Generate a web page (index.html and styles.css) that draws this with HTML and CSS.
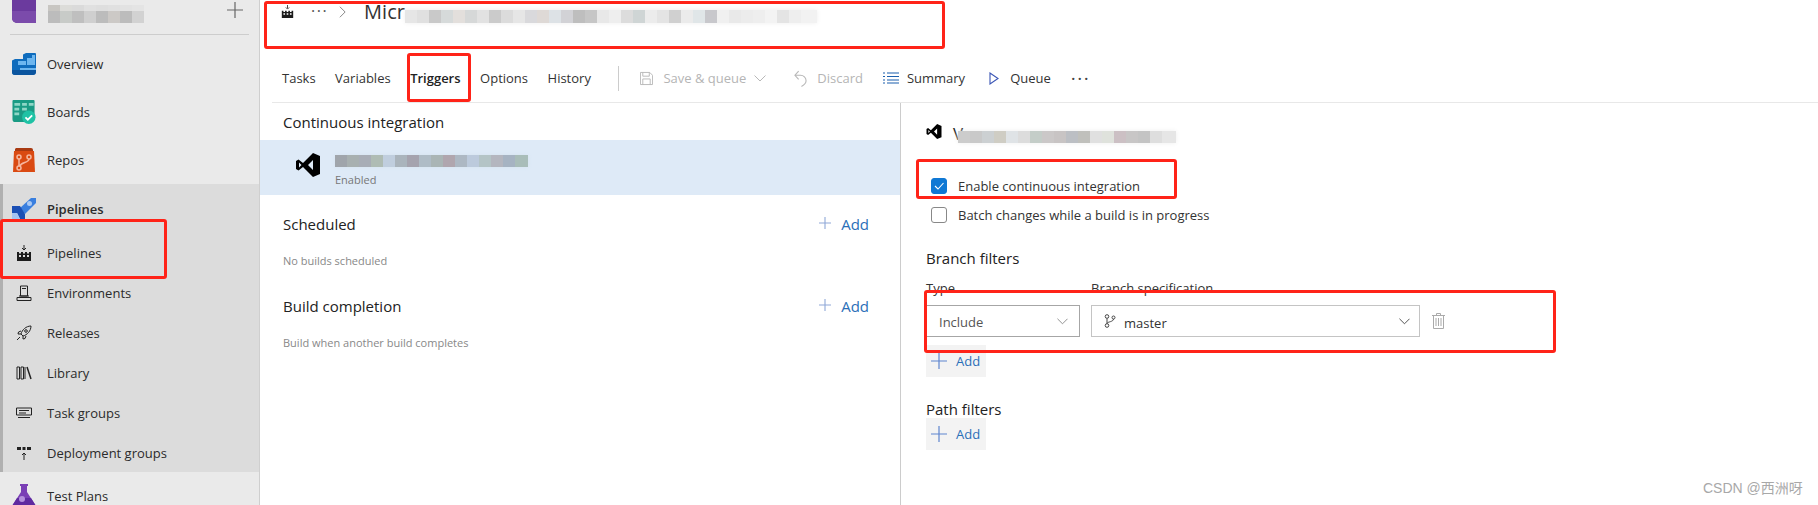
FILE: index.html
```html
<!DOCTYPE html>
<html lang="en">
<head>
<meta charset="utf-8">
<title>Pipeline triggers</title>
<link rel="stylesheet" href="styles.css">
</head>
<body>
<div class="app">
  <aside class="sidebar">
    <div class="org">
      <svg class="org-logo" viewBox="0 0 24 23"><path d="M0 0h24v23H5a5 5 0 0 1-5-5z" fill="#6b3a9e"/><path d="M0 11h24v12H5a5 5 0 0 1-5-5z" fill="#7b4bab"/></svg>
      <span class="mosaic mosaic-org"></span>
      <svg class="org-plus" viewBox="0 0 16 16"><path d="M8 0v16M0 8h16" stroke="#666" stroke-width="1.2"/></svg>
    </div>
    <nav class="nav">
      <a class="nav-item"><svg class="hub" viewBox="0 0 24 22"><path d="M0 7.5 3 6h8V1.5L14 0h9a1 1 0 0 1 1 1v17a4 4 0 0 1-4 4H3a3 3 0 0 1-3-3z" fill="#0f6cbd"/><path d="M8 15h16v3H8zM6 8h8v4H6zM15 5h5V2h3v10h-8z" fill="#6db6ef"/><path d="M0 17h24v2a3 3 0 0 1-3 3H3a3 3 0 0 1-3-3z" fill="#0b559f"/></svg><span>Overview</span></a>
      <a class="nav-item"><svg class="hub" viewBox="0 0 24 25"><path d="M0 1a1 1 0 0 1 1-1h21a1 1 0 0 1 1 1v15H12v7H3a3 3 0 0 1-3-3z" fill="#1a9b84"/><path d="M2 3h6v3H2zM10 3h5v3h-5zM17 3h5v3h-5zM2 8h5v3H2zM10 8h5v3h-5zM2 13h5v3H2z" fill="#8ed6c6"/><circle cx="17" cy="18" r="7" fill="#1fc2a5"/><path d="m13.5 18 2.5 2.5 4.500-4.500" fill="none" stroke="#fff" stroke-width="1.800"/></svg><span>Boards</span></a>
      <a class="nav-item"><svg class="hub" viewBox="0 0 24 24"><path d="M4 0h15a2 2 0 0 1 2 2v4H3V1z" fill="#a83a12"/><path d="M2 3h20l1 21H1z" fill="#da4a12"/><g fill="none" stroke="#f6b79f" stroke-width="1.500"><circle cx="7" cy="9" r="2"/><circle cx="17" cy="9" r="2"/><circle cx="7" cy="20" r="2"/><path d="M7 11v7M17 11c0 4-8 3-9 7"/></g></svg><span>Repos</span></a>
      <div class="section">
        <a class="nav-item nav-head"><svg class="hub" viewBox="0 0 24 24"><path d="M8 11 19 1h5v5L13 17z" fill="#3a7fdf"/><circle cx="17.500" cy="6.500" r="2.500" fill="#a9c8f3"/><path d="M0 9h8l5 8v7H9L5 16H0z" fill="#1a4fb5"/><path d="M0 16h5l3 6H0z" fill="#a3c3f2"/></svg><span>Pipelines</span></a>
        <a class="nav-item sub"><svg class="sub-icon" viewBox="0 0 16 16"><path d="M8 0v4M6 3l2 2 2-2" fill="none" stroke="#222" stroke-width="1"/><path d="M1 7h2v1.500h2V7h2v1.500h2V7h2v1.500h2V7h2v9H1z" fill="#1c1c1c"/><path d="M3 10h2v2H3zM7 10h2v2H7zM11 10h2v2h-2z" fill="#dcdcdc"/></svg><span>Pipelines</span></a>
        <a class="nav-item sub"><svg class="sub-icon" viewBox="0 0 16 16"><path d="M4.500 1h7v10h-7zM6 3.500h4M1 15.500v-3h14v3zM3 11h10" fill="none" stroke="#222"/></svg><span>Environments</span></a>
        <a class="nav-item sub"><svg class="sub-icon" viewBox="0 0 16 16"><path d="M5 9c1-4 5-8 10-8 0 5-4 9-8 10zM5 6 2.500 7 2 9l3 0M10 11l-1 2.500-2 .500V11" fill="none" stroke="#222"/><circle cx="10" cy="6" r="1.300" fill="none" stroke="#222"/><path d="M4 12l-3 3" stroke="#222"/></svg><span>Releases</span></a>
        <a class="nav-item sub"><svg class="sub-icon" viewBox="0 0 16 16"><path d="M1 2h2.500v12H1zM5 2h2.500v12H5zM9 2v12" fill="none" stroke="#222"/><path d="m11 2 4 12" fill="none" stroke="#222" stroke-width="1.500"/></svg><span>Library</span></a>
        <a class="nav-item sub"><svg class="sub-icon" viewBox="0 0 16 16"><path d="M.5 3h15v7H.5zM3 5.500h10M3 8h7M2 12.500h12" fill="none" stroke="#222"/></svg><span>Task groups</span></a>
        <a class="nav-item sub"><svg class="sub-icon" viewBox="0 0 16 16"><path d="M1 2h4v3H1zM6.500 2h3v3h-3zM11 2h4v3h-4z" fill="#222"/><path d="M8 15V8M6 10l2-2 2 2" fill="none" stroke="#222"/></svg><span>Deployment groups</span></a>
      </div>
      <a class="nav-item"><svg class="hub" viewBox="0 0 24 24"><path d="M8 0h8v2h-1v6l9 14v2H0v-2L9 8V2H8z" fill="#7a3fb5"/><path d="M5 14h14l5 8v2H0v-2z" fill="#5f2aa0"/><circle cx="10" cy="15" r="3" fill="#b48fdc"/></svg><span>Test Plans</span></a>
    </nav>
  </aside>

  <main class="main">
    <header class="crumbs">
      <svg class="crumb-icon" viewBox="0 0 16 16"><path d="M8 0v4M6 3l2 2 2-2" fill="none" stroke="#222"/><path d="M1 7h2v1.500h2V7h2v1.500h2V7h2v1.500h2V7h2v9H1z" fill="#1c1c1c"/><path d="M3 10h2v2H3zM7 10h2v2H7zM11 10h2v2h-2z" fill="#fff"/></svg>
      <span class="crumb-dots">···</span>
      <svg class="crumb-chevron" viewBox="0 0 8 12"><path d="m1 0 6 6-6 6" fill="none" stroke="#777"/></svg>
      <span class="crumb-title">Micr</span><span class="mosaic mosaic-title"></span>
    </header>

    <div class="toolbar">
      <span class="tab">Tasks</span>
      <span class="tab">Variables</span>
      <span class="tab tab-on">Triggers</span>
      <span class="tab">Options</span>
      <span class="tab">History</span>
      <span class="divider"></span>
      <span class="cmd off cmd-save"><svg class="cmd-icon" viewBox="0 0 14 14"><path d="M.5.500h10l3 3v10H.500zM3 .500v4h7v-4M3 13.500v-6h8v6" fill="none" stroke="#b8b8b8"/></svg>Save &amp; queue<svg class="cmd-chev" viewBox="0 0 12 7"><path d="m.5.500 5.500 5.500 5.500-5.500" fill="none" stroke="#b8b8b8"/></svg></span>
      <span class="cmd off cmd-discard"><svg class="cmd-icon" viewBox="0 0 14 18"><path d="M1 5.500h6a6 6 0 0 1 6 6c0 2.500-2 4.500-5 6M5 1 1 5.500 5 10" fill="none" stroke="#b8b8b8" stroke-width="1.200"/></svg>Discard</span>
      <span class="cmd cmd-summary"><svg class="cmd-list" viewBox="0 0 16 12"><path d="M0 1h2M4 1h12M0 4.500h2M4 4.500h12M0 8h2M4 8h12M0 11h2M4 11h12" stroke="#1b5fae" stroke-width="1.200"/></svg>Summary</span>
      <span class="cmd cmd-queue"><svg class="cmd-play" viewBox="0 0 10 13"><path d="M1 1v11l8-5.500z" fill="none" stroke="#3a55b5" stroke-width="1.100"/></svg>Queue</span>
      <span class="more">···</span>
    </div>

    <div class="panes">
      <section class="left">
        <h2 class="ci-title">Continuous integration</h2>
        <div class="repo-row">
          <svg class="vs-big" viewBox="0 0 24 24"><path d="M17 0 24 3v18l-7 3-10-10-4.500 3.500L0 16V8l2.500-1.500L7 10zM17 7l-5 5 5 5zM3 9.500v5L5.500 12z" fill="#000" fill-rule="evenodd"/></svg>
          <div class="repo-text"><span class="mosaic mosaic-repo"></span><span class="repo-state">Enabled</span></div>
        </div>
        <div class="sec-head first"><h2>Scheduled</h2><span class="add-link"><svg class="add-plus" viewBox="0 0 12 12"><path d="M6 0v12M0 6h12" stroke="#8fa8d8" stroke-width="1.100"/></svg>Add</span></div>
        <p class="note">No builds scheduled</p>
        <div class="sec-head"><h2>Build completion</h2><span class="add-link"><svg class="add-plus" viewBox="0 0 12 12"><path d="M6 0v12M0 6h12" stroke="#8fa8d8" stroke-width="1.100"/></svg>Add</span></div>
        <p class="note">Build when another build completes</p>
      </section>

      <section class="right">
        <div class="detail-title">
          <svg class="vs-small" viewBox="0 0 24 24"><path d="M17 0 24 3v18l-7 3-10-10-4.500 3.500L0 16V8l2.500-1.500L7 10zM17 7l-5 5 5 5zM3 9.500v5L5.500 12z" fill="#000" fill-rule="evenodd"/></svg>
          <span class="detail-v">V</span><span class="mosaic mosaic-detail"></span>
        </div>
        <label class="check check-first"><span class="box box-on"><svg viewBox="0 0 16 16"><path d="m4 8 3 3 5.500-6" fill="none" stroke="#fff" stroke-width="1.100"/></svg></span>Enable continuous integration</label>
        <label class="check"><span class="box"></span>Batch changes while a build is in progress</label>
        <h2 class="filter-head branch-head">Branch filters</h2>
        <div class="filter-grid">
          <span class="field-label">Type</span>
          <span class="field-label">Branch specification</span>
          <span></span>
          <div class="select select-type"><span class="select-text">Include</span><svg class="select-chev light" viewBox="0 0 12 7"><path d="m.5.500 5.500 5.500 5.500-5.500" fill="none" stroke="#888"/></svg></div>
          <div class="select select-branch"><svg class="branch-icon" viewBox="0 0 12 14"><g fill="none" stroke="#444"><circle cx="3" cy="2.500" r="1.800"/><circle cx="3" cy="11.500" r="1.800"/><circle cx="9.500" cy="3.500" r="1.500"/><path d="M3 4.500v5M9.500 5c0 3-6 2.500-6.500 4.500"/></g></svg><span class="select-text">master</span><svg class="select-chev" viewBox="0 0 12 7"><path d="m.5.500 5.500 5.500 5.500-5.500" fill="none" stroke="#444"/></svg></div>
          <svg class="trash" viewBox="0 0 13 16"><path d="M4.500 2V.500h4V2M0 2.500h13M1.500 3v12.500h10V3" fill="none" stroke="#aaa"/><path d="M4 5v8M6.500 5v8M9 5v8" stroke="#aaa"/></svg>
        </div>
        <div class="add-btn add-branch"><svg class="btn-plus" viewBox="0 0 16 16"><path d="M8 0v16M0 8h16" stroke="#5f86cf" stroke-width="1.200"/></svg>Add</div>
        <h2 class="filter-head path-head">Path filters</h2>
        <div class="add-btn"><svg class="btn-plus" viewBox="0 0 16 16"><path d="M8 0v16M0 8h16" stroke="#5f86cf" stroke-width="1.200"/></svg>Add</div>
      </section>
    </div>
  </main>
</div>

<div class="mark mark-title"></div>
<div class="mark mark-triggers"></div>
<div class="mark mark-pipelines"></div>
<div class="mark mark-enable"></div>
<div class="mark mark-branch"></div>
<div class="watermark">CSDN @西洲呀</div>
</body>
</html>
```
FILE: styles.css
```css
* { box-sizing: border-box; }
html, body { margin: 0; height: 505px; overflow: hidden; background: #fff; }
body { position: relative; font-family: "Open Sans", "Liberation Sans", sans-serif; font-size: 13px; color: #2b2b2b; }
h2, p { margin: 0; font-weight: 400; }

.app { display: flex; height: 505px; }

/* Sidebar */
.sidebar { width: 260px; flex: none; background: #eaeaea; border-right: 1px solid #cfcfcf; overflow: hidden; }
.org { position: relative; display: flex; align-items: flex-start; height: 35px; margin: 0 10px; border-bottom: 1px solid #cdcdcd; }
.org-logo { width: 24px; height: 23px; margin-left: 2px; flex: none; }
.org-plus { width: 16px; height: 16px; margin: 2px 6px 0 auto; }
.mosaic { display: block; flex: none; box-shadow: 0 0 5px #eee; }
.mosaic-org { width: 96px; height: 18px; margin: 5px 0 0 12px; box-shadow: none;
  background:
    linear-gradient(90deg,#c8c6c2 12px,#dcdcd9 0 24px,#dadada 0 36px,#e0e0e0 0 48px,#dedede 0 60px,#e0e0e0 0 72px,#e2e2e2 0 84px,#e4e4e4 0) top/100% 6px no-repeat,
    linear-gradient(90deg,#bcbcbc 12px,#c8cbc8 0 24px,#bfbfbf 0 36px,#cfcfcf 0 48px,#bcbcbc 0 60px,#ccc9c6 0 72px,#bcbcbc 0 84px,#d2d2d2 0); }
.nav { display: flex; flex-direction: column; margin-top: 5px; }
.nav-item { display: flex; align-items: center; height: 48px; padding-left: 12px; flex: none; }
.nav-item span { margin-left: 11px; }
.hub { width: 24px; height: 24px; flex: none; }
.section { height: 288px; background: #dcdcdc; border-left: 3px solid #b0b0b0; }
.nav-head { height: 49px; padding-left: 9px; font-weight: 600; }
.sub { height: 40px; padding-left: 13px; }
.sub span { margin-left: 15px; }
.sub-icon { width: 16px; height: 16px; flex: none; }

/* Main */
.main { flex: 1; min-width: 0; display: flex; flex-direction: column; }
.crumbs { display: flex; align-items: flex-start; height: 54px; padding-left: 21px; }
.crumb-icon { width: 13px; height: 13px; margin-top: 5px; }
.crumb-dots { margin: 1px 0 0 17px; font-size: 16px; line-height: 20px; color: #555; letter-spacing: 1.5px; }
.crumb-chevron { width: 7px; height: 12px; margin: 6px 0 0 11px; }
.crumb-title { margin-left: 18px; font-size: 20px; line-height: 24px; color: #333; }
.mosaic-title { width: 412px; height: 13px; margin-top: 10px;
  background: linear-gradient(90deg,#e6e6e6 12px,#e0e0e0 0 24px,#c9c9c9 0 36px,#d6dada 0 48px,#e3dfdc 0 60px,#d6d8d8 0 72px,#e2e2e2 0 84px,#cbcbcb 0 96px,#dcdcdc 0 108px,#e6e6e6 0 120px,#d9d9dc 0 132px,#ded9d6 0 144px,#dde2e6 0 156px,#d2d2d6 0 168px,#bebebe 0 180px,#c6c6c6 0 192px,#e8e8e8 0 204px,#eee 0 216px,#dcdcdc 0 228px,#cfd5d5 0 240px,#ececec 0 252px,#e4e4e4 0 264px,#d0d0d0 0 276px,#ebebeb 0 288px,#e0e6e8 0 300px,#c8c8cc 0 312px,#f0f0f0 0 324px,#e9e9e9 0 336px,#ececec 0 348px,#eee 0 360px,#f3f3f3 0 372px,#e4e4e4 0 384px,#eee 0 396px,#f2f2f2 0); }

.toolbar { display: flex; align-items: center; height: 49px; margin-left: 12px; padding-left: 10px; border-bottom: 1px solid #e8e8e8; flex: none; }
.tab { margin-right: 19.5px; color: #333; }
.tab-on { font-weight: 600; color: #222; }
.divider { width: 1px; height: 25px; margin: 0 21px 0 8px; background: #ccc; }
.cmd { display: flex; align-items: center; color: #333; }
.off { color: #b5b5b5; }
.cmd-icon { width: 13px; height: 15px; margin-right: 10px; }
.cmd-discard .cmd-icon { height: 17px; }
.cmd-chev { width: 12px; height: 7px; margin-left: 8px; }
.cmd-discard { margin-left: 28px; }
.cmd-summary { margin-left: 20px; }
.cmd-list { width: 16px; height: 12px; margin-right: 8px; }
.cmd-queue { margin-left: 24px; }
.cmd-play { width: 10px; height: 13px; margin-right: 11px; }
.more { margin-left: 20px; font-size: 19px; color: #444; line-height: 16px; letter-spacing: 1.5px; }

.panes { flex: 1; display: flex; min-height: 0; }
.left { width: 640px; flex: none; }
.ci-title { height: 37px; padding-left: 23px; font-size: 15px; line-height: 38px; color: #222; }
.repo-row { display: flex; height: 55px; padding-left: 36px; background: #deeaf7; }
.vs-big { width: 24px; height: 24px; margin-top: 13px; }
.repo-text { margin-left: 15px; }
.mosaic-repo { width: 193px; height: 12px; margin-top: 15px; box-shadow: 0 0 4px #d5e2ef;
  background: linear-gradient(90deg,#a0a5ab 12px,#a8b0b0 0 24px,#a8adb6 0 36px,#afbcb4 0 48px,#c0cede 0 60px,#aab4bc 0 72px,#a5a3ae 0 84px,#afbcc6 0 96px,#aab5b5 0 108px,#b0a6ae 0 120px,#adb8c3 0 132px,#bccadc 0 144px,#b4c4c6 0 156px,#b4b6bf 0 168px,#a6b3c2 0 180px,#a9bdb9 0); }
.repo-state { display: block; margin-top: 6px; font-size: 11px; line-height: 14px; color: #777; }
.sec-head { display: flex; align-items: center; justify-content: space-between; height: 40px; margin-top: 8px; padding: 2px 31px 0 23px; }
.sec-head h2 { font-size: 15px; color: #222; }
.add-link { display: flex; align-items: center; font-size: 15px; color: #2a6fb8; }
.add-plus { width: 12px; height: 12px; margin: -2px 10px 0 0; }
.note { height: 34px; padding-left: 23px; font-size: 11px; line-height: 36px; color: #888; }

.right { flex: 1; border-left: 1px solid #ccc; padding-left: 25px; }
.detail-title { display: flex; align-items: flex-start; height: 20px; margin-top: 20px; }
.vs-small { width: 16px; height: 15px; margin-top: 1px; }
.detail-v { margin-left: 11px; font-size: 17px; line-height: 22px; color: #222; width: 5px; }
.mosaic-detail { width: 218px; height: 12px; margin-top: 8px;
  background: linear-gradient(90deg,#ccc 12px,#c9c9c9 0 24px,#ccd0d2 0 36px,#cfcdc4 0 48px,#dfe3e6 0 60px,#dcdcdc 0 72px,#c4cdc8 0 84px,#cbc8c8 0 96px,#c8c4c4 0 108px,#bcbfc4 0 120px,#c0c0bc 0 132px,#e0e0e0 0 144px,#dfe2dc 0 156px,#ccc0c4 0 168px,#c8c6c6 0 180px,#c4c4c4 0 192px,#dedede 0 204px,#e6e6e6 0); }
.check { display: flex; align-items: center; height: 29px; margin-left: 5px; color: #333; }
.check-first { margin-top: 28px; }
.box { width: 16px; height: 16px; margin-right: 11px; border: 1px solid #888; border-radius: 3px; background: #fff; flex: none; }
.box svg { display: block; width: 16px; height: 16px; margin: -1px; }
.box-on { background: #0f78d4; border-color: #0f78d4; }
.filter-head { height: 20px; font-size: 15px; line-height: 20px; color: #222; }
.branch-head { margin-top: 18px; line-height: 22px; }
.filter-grid { display: grid; grid-template-columns: 154px 329px 13px; column-gap: 11px; grid-template-rows: 18px 32px; row-gap: 8px; align-items: center; margin-top: 12px; }
.field-label { color: #333; line-height: 18px; }
.select { display: flex; align-items: center; height: 32px; border: 1px solid #c4c4c4; }
.select-type { padding-left: 12px; border-color: #a6a6a6; color: #555; }
.select-branch { padding-left: 12px; color: #333; }
.select-text { padding-top: 3px; }
.select-type .select-text { padding-top: 2px; }
.branch-icon { width: 12px; height: 14px; margin-right: 8px; }
.select-chev { width: 11px; height: 7px; margin-left: auto; margin-right: 9px; }
.select-chev.light { margin-right: 11px; }
.trash { width: 13px; height: 16px; margin-left: 1px; }
.add-btn { display: flex; align-items: center; width: 60px; height: 32px; padding-left: 5px; background: #f3f3f3; color: #2a6fb8; margin-top: 0; }
.add-branch { margin-top: 8px; }
.btn-plus { width: 16px; height: 16px; margin-right: 9px; }
.path-head { height: 19px; margin-top: 22px; }

/* Annotation rectangles over the capture */
.mark { position: absolute; border: 3px solid #ff2318; border-radius: 3px; pointer-events: none; }
.mark-title { left: 264px; top: 1px; width: 681px; height: 48px; }
.mark-triggers { left: 407px; top: 53px; width: 64px; height: 49px; }
.mark-pipelines { left: 0; top: 219px; width: 167px; height: 60px; }
.mark-enable { left: 916px; top: 159px; width: 261px; height: 40px; }
.mark-branch { left: 924px; top: 290px; width: 632px; height: 63px; }
.watermark { position: absolute; left: 1703px; top: 479px; font-family: "Liberation Sans", "Noto Sans CJK SC", sans-serif; font-size: 14px; line-height: 18px; color: #a8a8a8; }
```
